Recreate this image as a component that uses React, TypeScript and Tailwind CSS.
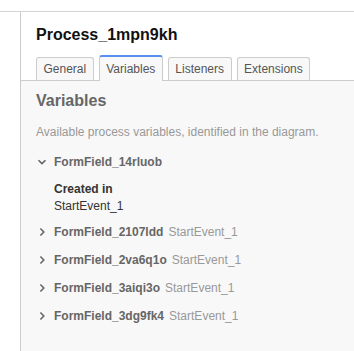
import React from 'react';

interface ProcessVariable {
    name: string;
    origin: string;
}

const tabs = ['General', 'Variables', 'Listeners', 'Extensions'];

const variables: ProcessVariable[] = [
    { name: 'FormField_2107ldd', origin: 'StartEvent_1' },
    { name: 'FormField_2va6q1o', origin: 'StartEvent_1' },
    { name: 'FormField_3aiqi3o', origin: 'StartEvent_1' },
    { name: 'FormField_3dg9fk4', origin: 'StartEvent_1' },
];

function ChevronDown() {
    return (
        <svg width="10" height="10" viewBox="0 0 10 10" className="ml-[1px]">
            <path d="M1.5 3.2 L5 6.6 L8.5 3.2" fill="none" stroke="#666" strokeWidth="1.6" />
        </svg>
    );
}

function ChevronRight() {
    return (
        <svg width="10" height="10" viewBox="0 0 10 10" className="ml-[1px]">
            <path d="M3.4 1.5 L6.8 5 L3.4 8.5" fill="none" stroke="#666" strokeWidth="1.6" />
        </svg>
    );
}

export default function App() {
    return (
        <div className="w-[354px] h-[351px] bg-white pt-[11px] font-['Liberation_Sans',Arial,sans-serif] overflow-hidden">
            <div className="h-full border-t border-[#d4d4d4] pl-[20px]">
                <div className="h-full border-l border-[#cccccc] flex flex-col">

                    {/* header */}
                    <div className="bg-white pt-[14px]">
                        <h1 className="pl-[15px] text-[16px] leading-[18px] font-bold text-[#111] mb-[11px]">Process_1mpn9kh</h1>
                        <div className="flex items-end gap-[5px] pl-[15px] border-b border-[#cccccc]">
                            {tabs.map((tab) => (
                                tab === 'Variables' ? (
                                    <div key={tab} className="h-[26px] -mb-[1px] px-[6.5px] flex items-center bg-[#f8f8f8] border-x border-[#cccccc] border-t-2 border-t-[#5b8def] rounded-t-[3px] text-[12px] leading-[14px] text-[#555]">
                                        {tab}
                                    </div>
                                ) : (
                                    <div key={tab} className="h-[23px] px-[6.5px] flex items-center bg-[#f8f8f8] border border-b-0 border-[#cccccc] rounded-t-[3px] text-[12px] leading-[14px] text-[#555]">
                                        {tab}
                                    </div>
                                )
                            ))}
                        </div>
                    </div>

                    {/* content */}
                    <div className="flex-1 bg-[#f8f8f8] px-[15px] pt-[11px]">
                        <h2 className="text-[16px] leading-[18px] font-bold text-[#666]">Variables</h2>
                        <p className="mt-[15px] text-[12px] leading-[14px] text-[#999]">
                            Available process variables, identified in the diagram.
                        </p>

                        <div className="mt-[16px] flex items-center text-[12px] leading-[14px]">
                            <span className="w-[18px] flex items-center"><ChevronDown /></span>
                            <span className="font-bold text-[#666]">FormField_14rluob</span>
                        </div>
                        <div className="pl-[18px] mt-[12px] text-[12px] leading-[17px] text-[#333]">
                            <div className="font-bold">Created in</div>
                            <div>StartEvent_1</div>
                        </div>

                        <div className="mt-[10px] flex flex-col gap-[14px]">
                            {variables.map((v) => (
                                <div key={v.name} className="flex items-center text-[12px] leading-[14px]">
                                    <span className="w-[18px] flex items-center"><ChevronRight /></span>
                                    <span className="font-bold text-[#666]">{v.name}</span>
                                    <span className="ml-[5px] text-[#999]">{v.origin}</span>
                                </div>
                            ))}
                        </div>
                    </div>

                </div>
            </div>
        </div>
    );
}
